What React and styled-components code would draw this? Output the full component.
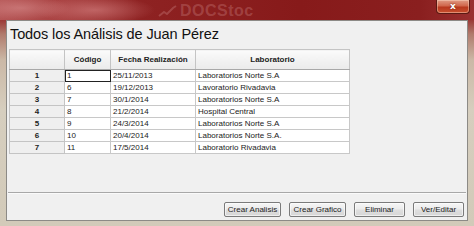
import React from "react";
import styled, { createGlobalStyle } from "styled-components";

const Global = createGlobalStyle`
  html, body { margin: 0; padding: 0; background: #d4ccbc; }
  body { width: 474px; height: 226px; overflow: hidden; }
`;

const Window = styled.div`
  position: relative;
  width: 474px;
  height: 226px;
  display: flex;
  flex-direction: column;
  background: linear-gradient(180deg, #a84848 0px, #98302e 18px, #b07a6c 34px, #cbb8a6 60px, #d6cebe 110px, #d2cab9 226px);
  font-family: "Liberation Sans", Arial, sans-serif;
`;

const TitleBar = styled.div`
  position: relative;
  height: 20px;
  flex: none;
  display: flex;
  justify-content: flex-end;
  align-items: flex-start;
  padding-right: 4px;
  background:
    radial-gradient(ellipse 60px 14px at 95px 10px, rgba(220,140,140,0.55), rgba(220,140,140,0) 100%),
    radial-gradient(ellipse 50px 12px at 20px 8px, rgba(215,140,140,0.6), rgba(215,140,140,0) 100%),
    linear-gradient(90deg, #b55656 0px, #a84040 60px, #8e2222 140px, #871a1a 300px, #8a1f1f 420px, #9a3030 474px);
`;

const Watermark = styled.div`
  position: absolute;
  left: 158px;
  top: 2px;
  display: flex;
  align-items: center;
  gap: 2px;
  color: rgba(215, 150, 150, 0.3);
  font-family: "Liberation Sans", Arial, sans-serif;
  font-size: 16px;
  font-weight: bold;
  letter-spacing: 0.5px;
  pointer-events: none;
`;

const CloseButton = styled.div`
  width: 34px;
  height: 14px;
  box-sizing: border-box;
  border: 1px solid #5a1a14;
  border-top: none;
  border-radius: 0 0 4px 4px;
  background: linear-gradient(180deg, #e09a84 0%, #d0674c 45%, #b8381e 55%, #c8502e 100%);
  box-shadow: inset 0 0 0 1px rgba(255, 220, 200, 0.45);
  display: flex;
  align-items: center;
  justify-content: center;
  color: #fff;
  font-family: "DejaVu Sans", sans-serif;
  font-weight: bold;
  font-size: 9px;
  line-height: 1;
  text-shadow: 0 0 2px #6a1a10;
`;

const Frame = styled.div`
  flex: 1;
  display: flex;
  padding: 0 6px 5px 6px;
  min-height: 0;
`;

const Panel = styled.div`
  flex: 1;
  display: flex;
  flex-direction: column;
  background: #f0f0f0;
  border: 1px solid #8c8a86;
  box-sizing: border-box;
`;

const Title = styled.div`
  font-family: "Liberation Sans", Arial, sans-serif;
  font-size: 14.5px;
  color: #111;
  padding: 4px 0 0 3px;
  height: 24px;
  box-sizing: border-box;
  line-height: 18px;
  letter-spacing: -0.1px;
`;

const Grid = styled.table`
  margin: 4px 0 0 2px;
  border-collapse: collapse;
  table-layout: fixed;
  width: 340px;
  font-family: "Liberation Sans", Arial, sans-serif;
  font-size: 8px;
  color: #222;
  border: 1px solid #b8b8b8;
`;

const Col = styled.col`
  width: ${(p) => p.$w}px;
`;

const HeadCell = styled.th`
  height: 19px;
  padding: 0;
  font-weight: bold;
  font-size: 8px;
  color: #222;
  text-align: center;
  background: linear-gradient(180deg, #fbfbfb 0%, #f2f2f2 50%, #ebebeb 100%);
  border: 1px solid #c4c4c4;
  border-bottom-color: #a8a8a8;
`;

const RowHead = styled.td`
  height: 11px;
  padding: 0;
  font-weight: bold;
  text-align: center;
  background: #efefef;
  border: 1px solid #c4c4c4;
  line-height: 10px;
`;

const Cell = styled.td`
  height: 11px;
  padding: 0 0 0 2px;
  background: #fff;
  border: 1px solid #c8c8c8;
  line-height: 10px;
  white-space: nowrap;
  overflow: hidden;
  outline: ${(p) => (p.$focus ? "1px solid #222" : "none")};
  outline-offset: -1px;
`;

const Spacer = styled.div`
  flex: 1;
`;

const Separator = styled.div`
  height: 1px;
  margin: 0 1px;
  background: #a8a8a8;
  border-bottom: 1px solid #fafafa;
`;

const ButtonRow = styled.div`
  display: flex;
  justify-content: flex-end;
  gap: 8px;
  padding: 8px 3px 3px 0;
`;

const Button = styled.div`
  width: ${(p) => p.$w}px;
  height: 15px;
  box-sizing: border-box;
  border: 1px solid #7a7a7a;
  border-radius: 2px;
  background: linear-gradient(180deg, #f6f6f6 0%, #ececec 45%, #dedede 55%, #d6d6d6 100%);
  box-shadow: inset 0 0 0 1px rgba(255, 255, 255, 0.6);
  display: flex;
  align-items: center;
  justify-content: center;
  font-family: "Liberation Sans", Arial, sans-serif;
  font-size: 8px;
  color: #222;
`;

const rows = [
  ["1", "25/11/2013", "Laboratorios Norte S.A"],
  ["6", "19/12/2013", "Lavoratorio Rivadavia"],
  ["7", "30/1/2014", "Laboratorios Norte S.A"],
  ["8", "21/2/2014", "Hospital Central"],
  ["9", "24/3/2014", "Laboratorios Norte S.A"],
  ["10", "20/4/2014", "Laboratorios Norte S.A."],
  ["11", "17/5/2014", "Laboratorio Rivadavia"],
];

const colWidths = [55, 46, 85, 154];

export default function App() {
  return (
    <>
      <Global />
      <Window>
        <TitleBar>
          <Watermark>
            <svg width="20" height="12" viewBox="0 0 20 12">
              <path d="M1 11 L6 7 L9 9 L15 3 L18 1" stroke="rgba(215,150,150,0.3)" strokeWidth="2" fill="none" />
            </svg>
            <span>DOCStoc</span>
          </Watermark>
          <CloseButton>x</CloseButton>
        </TitleBar>
        <Frame>
          <Panel>
            <Title>Todos los Análisis de Juan Pérez</Title>
            <Grid>
              <colgroup>
                {colWidths.map((w, i) => (
                  <Col key={i} $w={w} />
                ))}
              </colgroup>
              <thead>
                <tr>
                  <HeadCell></HeadCell>
                  <HeadCell>Código</HeadCell>
                  <HeadCell>Fecha Realización</HeadCell>
                  <HeadCell>Laboratorio</HeadCell>
                </tr>
              </thead>
              <tbody>
                {rows.map((r, i) => (
                  <tr key={i}>
                    <RowHead>{i + 1}</RowHead>
                    <Cell $focus={i === 0}>{r[0]}</Cell>
                    <Cell>{r[1]}</Cell>
                    <Cell>{r[2]}</Cell>
                  </tr>
                ))}
              </tbody>
            </Grid>
            <Spacer />
            <Separator />
            <ButtonRow>
              <Button $w={57}>Crear Analisis</Button>
              <Button $w={57}>Crear Grafico</Button>
              <Button $w={51}>Eliminar</Button>
              <Button $w={51}>Ver/Editar</Button>
            </ButtonRow>
          </Panel>
        </Frame>
      </Window>
    </>
  );
}
